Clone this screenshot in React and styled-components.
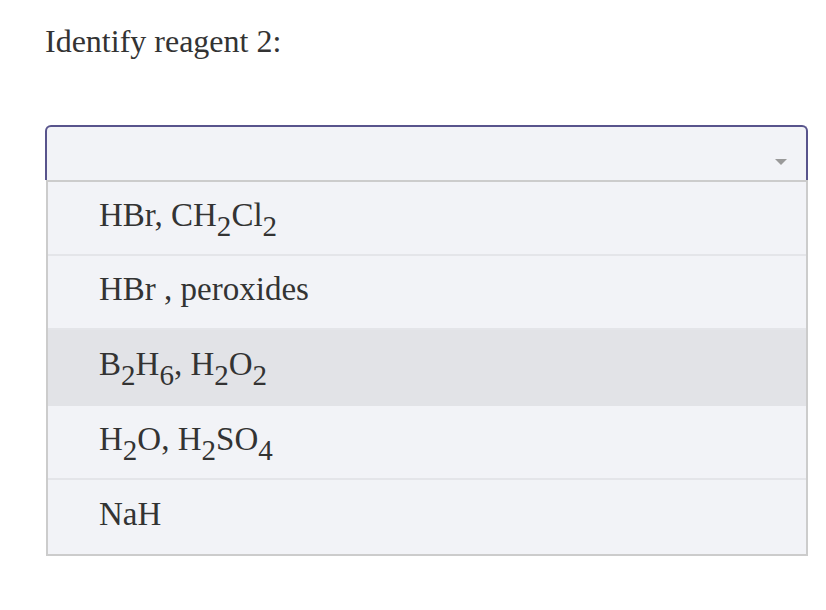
import React from "react";
import styled, { createGlobalStyle } from "styled-components";

const Global = createGlobalStyle`
  html, body { margin: 0; padding: 0; background: #ffffff; }
  body { font-family: "Liberation Serif", "Times New Roman", serif; color: #333333; }
`;

const Page = styled.div`
  padding: 23px 18px 0 45px;
`;

const Label = styled.div`
  font-size: 32px;
  line-height: 37px;
  color: #333333;
`;

const Field = styled.div`
  margin-top: 65px;
  width: 763px;
  display: flex;
  flex-direction: column;
`;

const SelectBox = styled.div`
  box-sizing: border-box;
  height: 55px;
  border: 2px solid #58548c;
  border-bottom: none;
  border-radius: 6px 6px 0 0;
  background: #f2f3f7;
  display: flex;
  justify-content: flex-end;
  align-items: flex-start;
  padding: 32px 19px 0 0;
`;

const Caret = styled.span`
  width: 0;
  height: 0;
  border-left: 6.5px solid transparent;
  border-right: 6.5px solid transparent;
  border-top: 6px solid #9a9a9a;
`;

const Menu = styled.div`
  margin-left: 1px;
  box-sizing: border-box;
  border: 2px solid #cccccc;
  background: #f2f3f7;
  display: flex;
  flex-direction: column;
`;

const Option = styled.div`
  box-sizing: border-box;
  height: ${(p) => (p.$active ? "76px" : "74px")};
  display: flex;
  align-items: center;
  padding: 0 0 6px 51px;
  font-size: 33px;
  line-height: 38px;
  color: #333333;
  background: ${(p) => (p.$active ? "#e2e3e7" : "#f2f3f7")};
  border-bottom: ${(p) =>
    p.$last ? "none" : `2px solid ${p.$active ? "#e2e3e7" : "#e4e5e9"}`};
`;

const Sub = styled.span`
  font-size: 0.88em;
  line-height: 0;
  position: relative;
  top: 0.34em;
`;

const options = [
  <>HBr, CH<Sub>2</Sub>Cl<Sub>2</Sub></>,
  <>HBr , peroxides</>,
  <>B<Sub>2</Sub>H<Sub>6</Sub>, H<Sub>2</Sub>O<Sub>2</Sub></>,
  <>H<Sub>2</Sub>O, H<Sub>2</Sub>SO<Sub>4</Sub></>,
  <>NaH</>,
];

export default function App() {
  return (
    <Page>
      <Global />
      <Label>Identify reagent 2:</Label>
      <Field>
        <SelectBox>
          <Caret />
        </SelectBox>
        <Menu>
          {options.map((o, i) => (
            <Option key={i} $active={i === 2} $last={i === options.length - 1}>
              <span>{o}</span>
            </Option>
          ))}
        </Menu>
      </Field>
    </Page>
  );
}
